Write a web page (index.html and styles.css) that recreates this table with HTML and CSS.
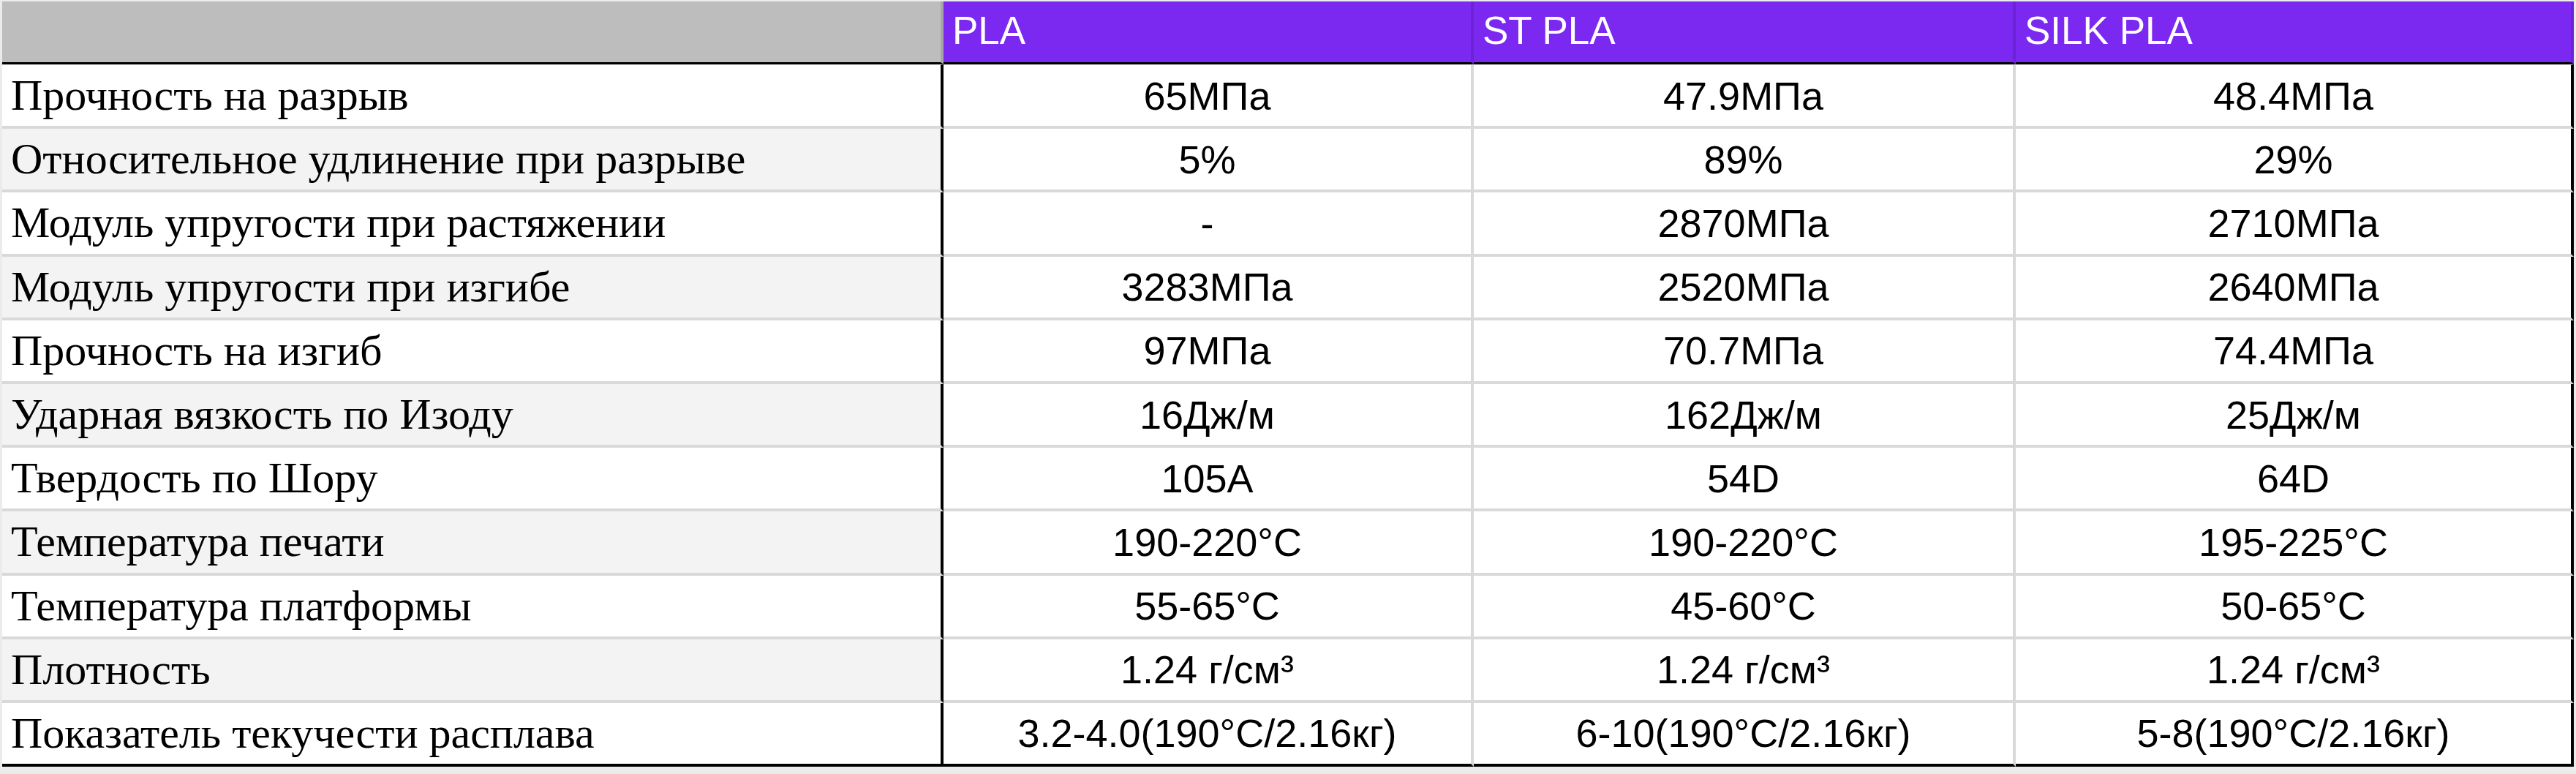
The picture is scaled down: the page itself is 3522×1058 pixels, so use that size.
FILE: index.html
```html
<!DOCTYPE html>
<html lang="ru">
<head>
<meta charset="utf-8">
<title>PLA</title>
<link rel="stylesheet" href="styles.css">
</head>
<body>
<table class="spec">
  <thead>
    <tr>
      <th class="corner"></th>
      <th class="mat c2">PLA</th>
      <th class="mat c3">ST PLA</th>
      <th class="mat c4 last">SILK PLA</th>
    </tr>
  </thead>
  <tbody>
    <tr class="first"><td class="label">Прочность на разрыв</td><td class="val">65МПа</td><td class="val">47.9МПа</td><td class="val last">48.4МПа</td></tr>
    <tr class="alt"><td class="label">Относительное удлинение при разрыве</td><td class="val">5%</td><td class="val">89%</td><td class="val last">29%</td></tr>
    <tr><td class="label">Модуль упругости при растяжении</td><td class="val">-</td><td class="val">2870МПа</td><td class="val last">2710МПа</td></tr>
    <tr class="alt"><td class="label">Модуль упругости при изгибе</td><td class="val">3283МПа</td><td class="val">2520МПа</td><td class="val last">2640МПа</td></tr>
    <tr><td class="label">Прочность на изгиб</td><td class="val">97МПа</td><td class="val">70.7МПа</td><td class="val last">74.4МПа</td></tr>
    <tr class="alt"><td class="label">Ударная вязкость по Изоду</td><td class="val">16Дж/м</td><td class="val">162Дж/м</td><td class="val last">25Дж/м</td></tr>
    <tr><td class="label">Твердость по Шору</td><td class="val">105A</td><td class="val">54D</td><td class="val last">64D</td></tr>
    <tr class="alt"><td class="label">Температура печати</td><td class="val">190-220°C</td><td class="val">190-220°C</td><td class="val last">195-225°C</td></tr>
    <tr><td class="label">Температура платформы</td><td class="val">55-65°C</td><td class="val">45-60°C</td><td class="val last">50-65°C</td></tr>
    <tr class="alt"><td class="label">Плотность</td><td class="val">1.24 г/см³</td><td class="val">1.24 г/см³</td><td class="val last">1.24 г/см³</td></tr>
    <tr class="final"><td class="label">Показатель текучести расплава</td><td class="val">3.2-4.0(190°C/2.16кг)</td><td class="val">6-10(190°C/2.16кг)</td><td class="val last">5-8(190°C/2.16кг)</td></tr>
  </tbody>
</table>
</body>
</html>
```
FILE: styles.css
```css
html, body {
  margin: 0;
  padding: 0;
}
body {
  background: #ebebeb;
  padding: 2px 0 0 3px;
  width: 3522px;
  height: 1058px;
  box-sizing: border-box;
  overflow: hidden;
}
.spec {
  border-collapse: separate;
  border-spacing: 0;
  table-layout: fixed;
  width: 3516px;
  background: #ffffff;
}
.spec th, .spec td {
  box-sizing: border-box;
  padding: 0 12px;
  margin: 0;
  white-space: nowrap;
  overflow: hidden;
}
.spec th {
  height: 86px;
  vertical-align: top;
  padding-top: 9px;
  text-align: left;
  font-family: "Liberation Sans", Arial, sans-serif;
  font-weight: normal;
  font-size: 53px;
  color: #ffffff;
  border-right: 4px solid rgba(0, 0, 0, 0.12);
  border-bottom: 3px solid #000000;
}
.spec th.corner {
  width: 1287px;
  background: #bdbdbd;
}
.spec th.mat {
  background: #7b28f1;
}
.spec th.c2 { width: 725px; }
.spec th.c3 { width: 741px; }
.spec th.c4 { width: 763px; }

.spec td {
  height: 87.2px;
  vertical-align: middle;
  border-right: 4px solid #d9d9d9;
  border-bottom: 4px solid #d9d9d9;
  color: #000000;
}
.spec tr.first td {
  height: 88.2px;
  border-top: 1px solid #d9d9d9;
}
.spec tr.final td {
  border-bottom: 4px solid #000000;
}
.spec td.label {
  font-family: "Liberation Serif", "Times New Roman", serif;
  font-size: 60px;
  text-align: left;
  background: #ffffff;
  border-right: 4px solid #000000;
}
.spec tr.alt td.label {
  background: #f3f3f3;
}
.spec td.val {
  font-family: "Liberation Sans", Arial, sans-serif;
  font-size: 54px;
  text-align: center;
  background: #ffffff;
}
.spec td.last {
  border-right: 4px solid #000000;
}
```
